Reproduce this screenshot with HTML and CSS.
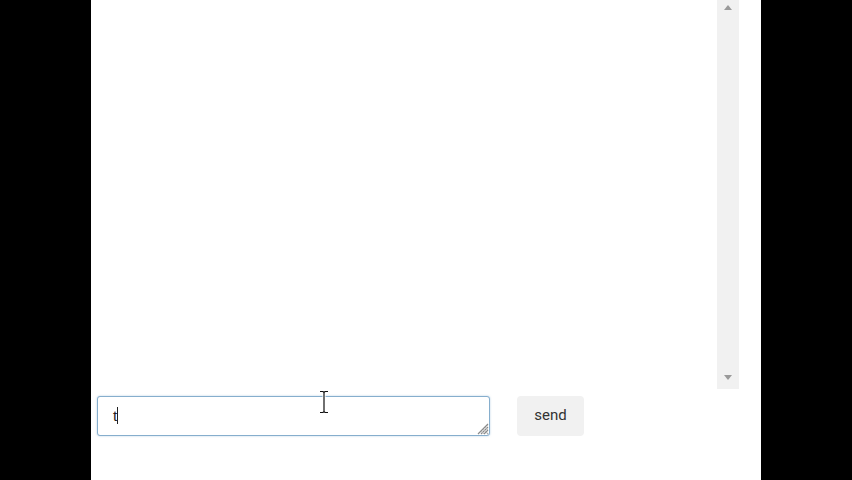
FILE: index.html
```html
<!DOCTYPE html>
<html>
<head>
<meta charset="utf-8">
<link rel="stylesheet" href="styles.css">
</head>
<body>
<div class="page">
  <div class="chat">
    <div class="messages"></div>
    <div class="scrollbar">
      <span class="arrow up"></span>
      <span class="arrow down"></span>
    </div>
  </div>
  <div class="composer">
    <div class="input-wrap">
      <textarea class="input">t</textarea>
      <span class="caret"></span>
      <svg class="grip" width="12" height="12" viewBox="0 0 12 12">
        <path d="M11 1L1 11M11 4L4 11M11 7L7 11M11 10L10 11" stroke="#8a8a8a" stroke-width="1.2"/>
        <path d="M4 8L7 11M6 6L11 11M8 4L11 7M10 2L11 3" stroke="#b5b5b5" stroke-width="0.8"/>
      </svg>
    </div>
    <button class="send">send</button>
  </div>
  <svg class="pointer" width="12" height="24" viewBox="0 0 12 24">
    <path d="M2 1.5h3l1 1 1-1h3M6 2.5v19M2 22.5h3l1-1 1 1h3" fill="none" stroke="#fff" stroke-width="3"/>
    <path d="M2 1.5h3l1 1 1-1h3M6 2.5v19M2 22.5h3l1-1 1 1h3" fill="none" stroke="#111" stroke-width="1.2"/>
  </svg>
</div>
</body>
</html>
```
FILE: styles.css
```css
html, body {
  margin: 0;
  padding: 0;
  background: #000;
  height: 100%;
}
.page {
  position: relative;
  margin-left: 91px;
  width: 670px;
  height: 480px;
  background: #fff;
  font-family: "Liberation Sans", Arial, sans-serif;
}
.chat {
  display: flex;
  height: 389px;
}
.messages {
  width: 626px;
}
.scrollbar {
  width: 22px;
  background: #f1f1f1;
  display: flex;
  flex-direction: column;
  justify-content: space-between;
  align-items: center;
  padding: 5px 0 9px;
  box-sizing: border-box;
}
.arrow {
  width: 0;
  height: 0;
  border-left: 4.5px solid transparent;
  border-right: 4.5px solid transparent;
}
.arrow.up {
  border-bottom: 5px solid #9a9a9a;
}
.arrow.down {
  border-top: 5px solid #9a9a9a;
}
.composer {
  display: flex;
  align-items: flex-start;
  gap: 27px;
  padding: 7px 0 0 6px;
}
.input-wrap {
  position: relative;
  width: 393px;
  height: 40px;
}
.input {
  display: block;
  width: 393px;
  height: 40px;
  box-sizing: border-box;
  border: 1px solid #86aecd;
  border-radius: 3px;
  box-shadow: 0 0 2px rgba(120, 165, 205, 0.6);
  padding: 10px 15px;
  font-family: "Liberation Sans", Arial, sans-serif;
  font-size: 15px;
  line-height: 18px;
  color: #222;
  outline: none;
  resize: none;
  margin: 0;
}
.caret {
  position: absolute;
  left: 20px;
  top: 11px;
  width: 1px;
  height: 17px;
  background: #222;
}
.grip {
  position: absolute;
  right: 1px;
  bottom: 1px;
}
.send {
  width: 67px;
  height: 40px;
  border: none;
  border-radius: 4px;
  background: #f1f1f1;
  color: #333;
  font-family: Roboto, "Liberation Sans", sans-serif;
  font-size: 15px;
  padding: 0 0 2px;
  margin: 0;
}
.pointer {
  position: absolute;
  left: 227px;
  top: 390px;
}
```
